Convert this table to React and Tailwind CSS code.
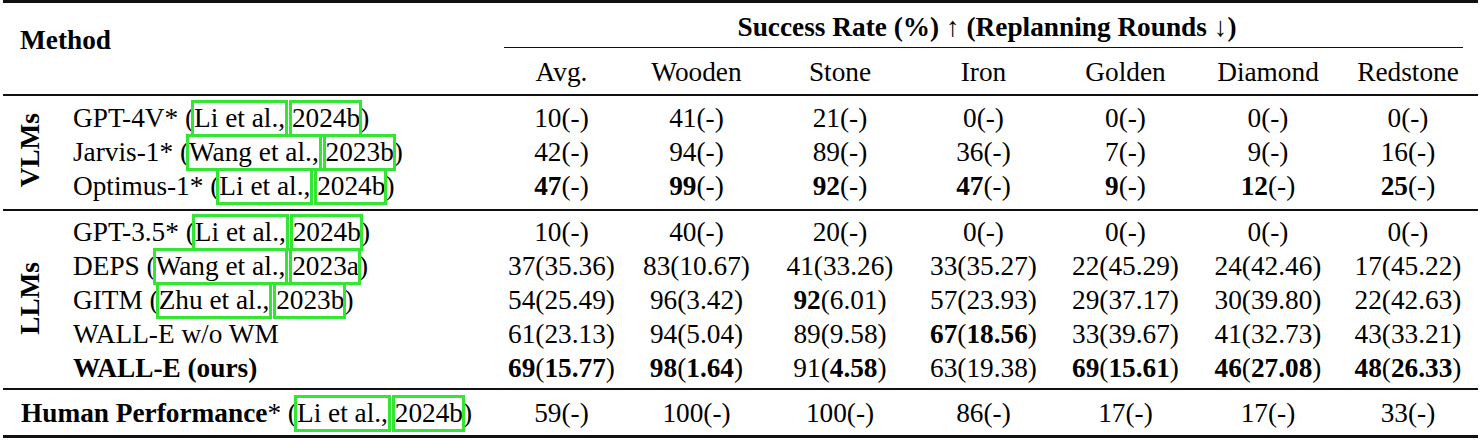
import React from 'react';

// column template shared by every block of the table
const GRID =
  'grid grid-cols-[56px_438px_129px_141px_146px_141px_143px_142px_138px] auto-rows-[34px] leading-[34px]';

const COLUMNS = ['Avg.', 'Wooden', 'Stone', 'Iron', 'Golden', 'Diamond', 'Redstone'];

const vlms = [
  { name: 'GPT-4V*', cite: ['Li et al.', '2024b'], cells: ['10(-)', '41(-)', '21(-)', '0(-)', '0(-)', '0(-)', '0(-)'] },
  { name: 'Jarvis-1*', cite: ['Wang et al.', '2023b'], cells: ['42(-)', '94(-)', '89(-)', '36(-)', '7(-)', '9(-)', '16(-)'] },
  {
    name: 'Optimus-1*',
    cite: ['Li et al.', '2024b'],
    cells: ['**47**(-)', '**99**(-)', '**92**(-)', '**47**(-)', '**9**(-)', '**12**(-)', '**25**(-)'],
  },
];

const llms = [
  { name: 'GPT-3.5*', cite: ['Li et al.', '2024b'], cells: ['10(-)', '40(-)', '20(-)', '0(-)', '0(-)', '0(-)', '0(-)'] },
  {
    name: 'DEPS',
    cite: ['Wang et al.', '2023a'],
    cells: ['37(35.36)', '83(10.67)', '41(33.26)', '33(35.27)', '22(45.29)', '24(42.46)', '17(45.22)'],
  },
  {
    name: 'GITM',
    cite: ['Zhu et al.', '2023b'],
    cells: ['54(25.49)', '96(3.42)', '**92**(6.01)', '57(23.93)', '29(37.17)', '30(39.80)', '22(42.63)'],
  },
  {
    name: 'WALL-E w/o WM',
    cells: ['61(23.13)', '94(5.04)', '89(9.58)', '**67**(**18.56**)', '33(39.67)', '41(32.73)', '43(33.21)'],
  },
  {
    name: 'WALL-E (ours)',
    bold: true,
    cells: [
      '**69**(**15.77**)',
      '**98**(**1.64**)',
      '91(**4.58**)',
      '63(19.38)',
      '**69**(**15.61**)',
      '**46**(**27.08**)',
      '**48**(**26.33**)',
    ],
  },
];

const human = ['59(-)', '100(-)', '100(-)', '86(-)', '17(-)', '17(-)', '33(-)'];

const LinkBox = ({ children, last }) => (
  <span className="relative">
    {children}
    <span
      className={`absolute -left-[3px] -top-[3px] -bottom-[4px] border-[3px] border-[#33e633] ${
        last ? '-right-[2px]' : '-right-[3px]'
      }`}
    />
  </span>
);

const Cite = ({ who, year }) => (
  <>
    {' ('}
    <LinkBox>{who},</LinkBox> <LinkBox last>{year}</LinkBox>
    {')'}
  </>
);

// "**47**(-)" -> bold 47, regular (-)
const Value = ({ v }) =>
  v
    .split(/(\*\*[^*]+\*\*)/)
    .filter(Boolean)
    .map((p, i) =>
      p.startsWith('**') ? (
        <span key={i} className="font-bold">
          {p.slice(2, -2)}
        </span>
      ) : (
        <span key={i}>{p}</span>
      )
    );

const Rule = ({ h = 'h-[2px]' }) => <div className={`${h} bg-[#111]`} />;

const Block = ({ label, rows, className }) => (
  <div className={`${GRID} ${className}`}>
    <div
      className="col-start-1 flex items-center justify-center"
      style={{ gridRow: `1 / span ${rows.length}` }}
    >
      <span className="font-bold leading-none [writing-mode:vertical-rl] rotate-180 -translate-y-[2px]">{label}</span>
    </div>
    {rows.map((r) => (
      <React.Fragment key={r.name}>
        <div className={`col-start-2 pl-[14px] whitespace-nowrap ${r.bold ? 'font-bold' : ''}`}>
          {r.name}
          {r.cite && <Cite who={r.cite[0]} year={r.cite[1]} />}
        </div>
        {r.cells.map((c, i) => (
          <div key={i} className="text-center whitespace-nowrap">
            <Value v={c} />
          </div>
        ))}
      </React.Fragment>
    ))}
  </div>
);

export default function App() {
  return (
    <div className="bg-white w-[1482px] h-[440px] text-black text-[27.3px] font-['Liberation_Serif','Times_New_Roman',serif]">
      <div className="ml-[3px] w-[1475px]">
        <Rule h="h-[3px]" />

        <div className="grid grid-cols-[56px_438px_129px_141px_146px_141px_143px_142px_138px] grid-rows-[34px_11px_34px] leading-[34px] pt-[7px] pb-[5px]">
          <div className="col-span-2 row-span-3 pl-[17px] pt-[13px] font-bold">Method</div>
          <div className="col-start-3 col-span-7 text-center font-bold whitespace-nowrap">
            Success Rate (%) <span className="font-normal">↑</span> (Replanning Rounds <span className="font-normal">↓</span>)
          </div>
          <div className="col-start-3 col-span-7 pt-[3px] pl-[7px] pr-[14px]">
            <div className="h-px bg-[#111]" />
          </div>
          {COLUMNS.map((c) => (
            <div key={c} className="text-center">
              {c}
            </div>
          ))}
        </div>

        <Rule />
        <Block label="VLMs" rows={vlms} className="pt-[5px] pb-[6px]" />
        <Rule />
        <Block label="LLMs" rows={llms} className="pt-[4px] pb-[3px]" />
        <Rule />

        <div className={`${GRID} pt-[6px] pb-[5px]`}>
          <div className="col-span-2 pl-[18px] whitespace-nowrap">
            <span className="font-bold">Human Performance</span>*
            <Cite who="Li et al." year="2024b" />
          </div>
          {human.map((c, i) => (
            <div key={i} className="text-center">
              <Value v={c} />
            </div>
          ))}
        </div>

        <Rule h="h-[3px]" />
      </div>
    </div>
  );
}
